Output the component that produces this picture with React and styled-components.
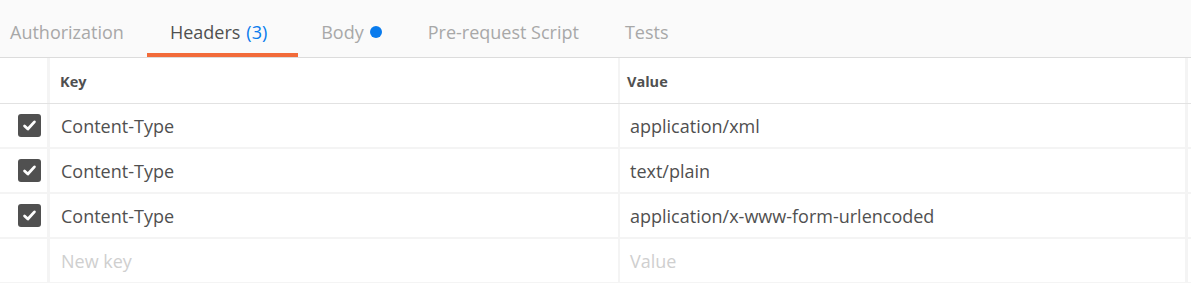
import React from "react";
import styled, { createGlobalStyle } from "styled-components";

const GlobalStyle = createGlobalStyle`
  body {
    margin: 0;
    background: #fff;
    font-family: "Open Sans", "Liberation Sans", sans-serif;
  }
`;

const tabs = [
  { label: "Authorization" },
  { label: "Headers", count: 3, active: true },
  { label: "Body", dot: true },
  { label: "Pre-request Script" },
  { label: "Tests" },
];

const headers = [
  { key: "Content-Type", value: "application/xml" },
  { key: "Content-Type", value: "text/plain" },
  { key: "Content-Type", value: "application/x-www-form-urlencoded" },
];

const App = () => {
  return (
    <StyledPanel>
      <GlobalStyle />
      <TabBar>
        {tabs.map((t) => (
          <Tab key={t.label} $active={t.active}>
            {t.label}
            {t.count !== undefined && <Count>({t.count})</Count>}
            {t.dot && <Dot />}
          </Tab>
        ))}
      </TabBar>
      <Table>
        <HeadRow>
          <CheckCell />
          <HeadCell>Key</HeadCell>
          <HeadCell $last>Value</HeadCell>
        </HeadRow>
        {headers.map((h, i) => (
          <Row key={i}>
            <CheckCell>
              <CheckBox>
                <svg width="15" height="15" viewBox="0 0 14 14">
                  <path
                    d="M2.4 7.4 L5.5 10.3 L11.6 3.6"
                    fill="none"
                    stroke="#fff"
                    strokeWidth="2.6"
                    strokeLinecap="round"
                    strokeLinejoin="round"
                  />
                </svg>
              </CheckBox>
            </CheckCell>
            <Cell>{h.key}</Cell>
            <Cell $last>{h.value}</Cell>
          </Row>
        ))}
        <Row>
          <CheckCell />
          <Cell $placeholder>New key</Cell>
          <Cell $last $placeholder>
            Value
          </Cell>
        </Row>
      </Table>
    </StyledPanel>
  );
};

const StyledPanel = styled.div`
  width: 1191px;
  height: 283px;
  overflow: hidden;
  background: #fff;
`;

const TabBar = styled.div`
  display: flex;
  height: 57px;
  background: #fafafa;
  border-bottom: 1px solid #dcdcdc;
  box-sizing: content-box;
`;

const Tab = styled.div`
  display: flex;
  align-items: center;
  height: 57px;
  box-sizing: border-box;
  padding: 11px 23px 0;
  font-size: 18px;
  color: ${(p) => (p.$active ? "#505050" : "#a8a8a8")};
  border-bottom: 4px solid ${(p) => (p.$active ? "#f26b3a" : "transparent")};
  white-space: nowrap;
  &:first-child {
    padding-left: 10px;
  }
`;

const Count = styled.span`
  color: #097bed;
  margin-left: 6px;
  margin-right: 8px;
`;

const Dot = styled.span`
  display: inline-block;
  width: 12px;
  height: 12px;
  border-radius: 50%;
  background: #097bed;
  margin-left: 6px;
`;

const Table = styled.div`
  display: flex;
  flex-direction: column;
`;

const HeadRow = styled.div`
  display: grid;
  grid-template-columns: 50px 570px 568px;
  height: 46px;
  border-bottom: 1px solid #e2e2e2;
  box-sizing: border-box;
`;

const Row = styled.div`
  display: grid;
  grid-template-columns: 50px 570px 568px;
  height: 45px;
  border-bottom: 2px solid #f4f4f4;
  box-sizing: border-box;
`;

const CheckCell = styled.div`
  display: flex;
  align-items: center;
  padding-left: 18px;
  border-right: 3px solid #f4f4f4;
`;

const CheckBox = styled.div`
  width: 23px;
  height: 23px;
  border-radius: 3px;
  background: #505050;
  display: flex;
  align-items: center;
  justify-content: center;
`;

const HeadCell = styled.div`
  display: flex;
  align-items: center;
  padding-left: ${(p) => (p.$last ? "7px" : "10px")};
  padding-top: 1px;
  font-size: 14.5px;
  font-weight: 700;
  color: #505050;
  border-right: ${(p) => (p.$last ? "3px" : "2px")} solid #f4f4f4;
`;

const Cell = styled.div`
  display: flex;
  align-items: center;
  padding-left: ${(p) => (p.$last ? "10px" : "11px")};
  font-size: 18px;
  color: ${(p) => (p.$placeholder ? "#cfcfcf" : "#505050")};
  border-right: ${(p) => (p.$last ? "3px" : "2px")} solid #f4f4f4;
`;

export default App;
